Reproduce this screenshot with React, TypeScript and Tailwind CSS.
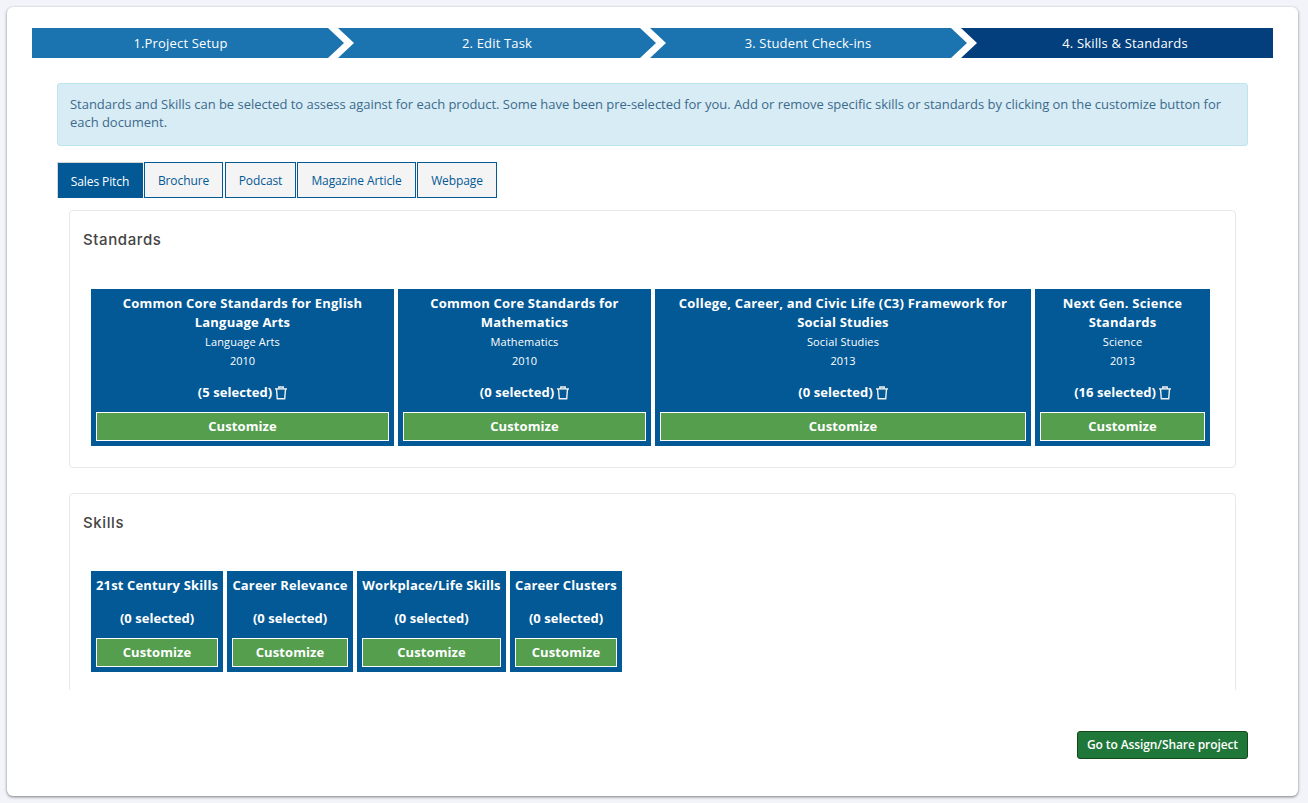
const steps = [
  { label: "1.Project Setup", cls: "w-[312px] pr-[15px] bg-[#1b73b0] [clip-path:polygon(0_0,296px_0,312px_15px,296px_30px,0_30px)]" },
  { label: "2. Edit Task", cls: "w-[318px] ml-[-6px] bg-[#1b73b0] [clip-path:polygon(0_0,302px_0,318px_15px,302px_30px,0_30px,16px_15px)]" },
  { label: "3. Student Check-ins", cls: "w-[317px] ml-[-6px] pr-[1px] bg-[#1b73b0] [clip-path:polygon(0_0,301px_0,317px_15px,301px_30px,0_30px,16px_15px)]" },
  { label: "4. Skills & Standards", cls: "w-[312px] ml-[-6px] pl-[16px] bg-[#023f7c] [clip-path:polygon(0_0,100%_0,100%_30px,0_30px,16px_15px)]" },
];

const tabs = [
  { label: "Sales Pitch", cls: "w-[86px] pr-[1px] text-white bg-[#025996] border-t border-l border-[#d5d5d5]" },
  { label: "Brochure", cls: "w-[79px] ml-px text-[#025996] bg-[#f4f4f4] border border-[#025996]" },
  { label: "Podcast", cls: "w-[71px] ml-[2px] text-[#025996] bg-[#f4f4f4] border border-[#025996]" },
  { label: "Magazine Article", cls: "w-[119px] ml-px text-[#025996] bg-[#f4f4f4] border border-[#025996]" },
  { label: "Webpage", cls: "w-[80px] ml-px text-[#025996] bg-[#f4f4f4] border border-[#025996]" },
];

const standards = [
  { title: "Common Core Standards for English Language Arts", subject: "Language Arts", year: "2010", count: 5, w: "w-[303px]", titleCls: "px-[15px]" },
  { title: "Common Core Standards for Mathematics", subject: "Mathematics", year: "2010", count: 0, w: "w-[253px]", titleCls: "px-[20px]" },
  { title: "College, Career, and Civic Life (C3) Framework for Social Studies", subject: "Social Studies", year: "2013", count: 0, w: "w-[376px]", titleCls: "px-[15px]" },
  { title: "Next Gen. Science Standards", subject: "Science", year: "2013", count: 16, w: "w-[175px]", titleCls: "px-[10px]" },
];

const skills = [
  { title: "21st Century Skills", w: "w-[132px]" },
  { title: "Career Relevance", w: "w-[126px]" },
  { title: "Workplace/Life Skills", w: "w-[149px]" },
  { title: "Career Clusters", w: "w-[112px]" },
];

const Customize = () => (
  <button className="w-full h-[29px] border border-white bg-[#549e4e] text-white text-[13px] font-bold leading-none tracking-[0.1px]">
    Customize
  </button>
);

const TrashIcon = () => (
  <svg width="12" height="14" viewBox="0 0 12 14" fill="none" stroke="#f1f1f1" strokeWidth="1.4">
    <path d="M0 2.9h12" />
    <path d="M3.8 2.7V1h4.4v1.7" />
    <path d="M1.5 3l.8 9.8h7.4l.8-9.8" />
  </svg>
);

const App = () => {
  return (
    <div className="h-[803px] bg-[#f3f4f9] p-[7px] pr-[10px] font-['Open_Sans',sans-serif] overflow-hidden">
      <div className="h-[789px] bg-white rounded-[6px] shadow-[0_1px_3px_rgba(0,0,0,0.5)] pt-[21px] px-[25px]">
        {/* Steps */}
        <div className="flex h-[30px]">
          {steps.map((s) => (
            <div key={s.label} className={`h-[30px] pt-[2px] flex items-center justify-center text-white text-[13px] tracking-[0.17px] ${s.cls}`}>
              {s.label}
            </div>
          ))}
        </div>

        <div className="ml-[25px] w-[1191px]">
          {/* Alert */}
          <div className="mt-[25px] h-[63px] rounded-[3px] border border-[#bee5eb] bg-[#d8ecf5] px-[12px] pt-[11px] text-[13px] leading-[18px] tracking-[-0.03px] text-[#3c6a8c]">
            Standards and Skills can be selected to assess against for each product. Some have been pre-selected for you. Add or remove specific skills or standards by clicking on the customize button for each document.
          </div>

          {/* Tabs */}
          <div className="mt-[16px] flex h-[36px]">
            {tabs.map((t) => (
              <div key={t.label} className={`h-[36px] pt-[2px] flex items-center justify-center text-[12px] tracking-[-0.1px] ${t.cls}`}>
                {t.label}
              </div>
            ))}
          </div>

          {/* Scrolling area, cut off at the bottom */}
          <div className="mt-[12px] h-[480px] overflow-hidden pl-[12px] pr-[12px]">
            <section className="h-[258px] rounded-[4px] border border-[#e8e8e8] pt-[20px] px-[13px]">
              <h2 className="text-[15px] leading-[18px] font-medium tracking-[0.6px] text-[#444444] font-['Inter',sans-serif]">Standards</h2>
              <div className="mt-[40px] ml-[8px] flex gap-[4px]">
                {standards.map((c) => (
                  <div key={c.title} className={`${c.w} h-[157px] bg-[#025996] px-[5px] text-center text-white flex flex-col`}>
                    <div className={`mt-[5px] h-[38px] text-[13px] leading-[19px] font-bold tracking-[0.2px] ${c.titleCls}`}>{c.title}</div>
                    <div className="text-[11px] leading-[19px] tracking-[0.15px]">{c.subject}</div>
                    <div className="text-[11px] leading-[19px]">{c.year}</div>
                    <div className="mt-[13px] h-[19px] flex items-center justify-center gap-[3px] text-[13px] font-bold tracking-[0.05px]">
                      ({c.count} selected)
                      <TrashIcon />
                    </div>
                    <div className="mt-[10px]">
                      <Customize />
                    </div>
                  </div>
                ))}
              </div>
            </section>

            <section className="mt-[25px] h-[260px] rounded-[4px] border border-[#e8e8e8] pt-[20px] px-[13px]">
              <h2 className="text-[15px] leading-[18px] font-medium tracking-[0.6px] text-[#444444] font-['Inter',sans-serif]">Skills</h2>
              <div className="mt-[39px] ml-[8px] flex gap-[4px]">
                {skills.map((c) => (
                  <div key={c.title} className={`${c.w} h-[101px] bg-[#025996] px-[5px] text-center text-white flex flex-col`}>
                    <div className="mt-[5px] text-[13px] leading-[19.5px] font-bold whitespace-nowrap tracking-[0.15px]">{c.title}</div>
                    <div className="mt-[13px] text-[13px] leading-[19.5px] font-bold tracking-[0.05px]">(0 selected)</div>
                    <div className="mt-[10px]">
                      <Customize />
                    </div>
                  </div>
                ))}
              </div>
            </section>
          </div>

          {/* Footer action */}
          <div className="mt-[41px] flex justify-end">
            <button className="h-[28px] w-[171px] rounded-[3px] border border-[#14491a] bg-[#20773a] text-white text-[12px] font-semibold tracking-[-0.1px]">
              Go to Assign/Share project
            </button>
          </div>
        </div>
      </div>
    </div>
  );
};

export default App;
